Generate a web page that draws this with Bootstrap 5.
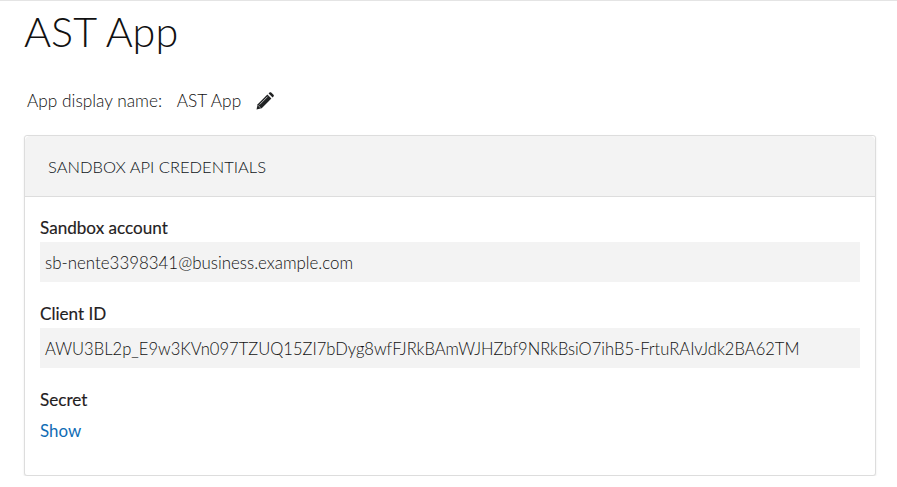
<!DOCTYPE html>
<html><head><meta charset="utf-8">
<link href="https://cdn.jsdelivr.net/npm/bootstrap@5.3.0/dist/css/bootstrap.min.css" rel="stylesheet">
<style>
body{font-family:"Lato","Open Sans",sans-serif;color:#111;background:#fff;border-top:1px solid #e4e4e4;overflow:hidden}
.pg{padding:0 21px 0 24px}
.ttl{font-size:41.3px;font-weight:300;margin:0;line-height:50px;padding-top:5px;color:#111}
.dn{font-size:17.3px;font-weight:300;margin:21px 0 10px 3px;height:48px;gap:14.5px}
.crd{border-color:#ddd;border-radius:3px;box-shadow:0 1px 2px rgba(0,0,0,.1)}
.crd .card-header{background:#f3f3f3;height:61px;padding:0 23px;border-color:#ddd;font-size:16.5px;font-weight:300;line-height:63px;text-transform:uppercase;color:#0d1420}
.crd .card-body{padding:19px 15px 27px}
.lb{font-size:17.1px;line-height:24px;margin-bottom:2px;color:#1f2122;-webkit-text-stroke:.15px #1f2122}
.vl{background:#f3f3f3;height:40px;line-height:42px;padding:0 5px;font-weight:300;margin-bottom:20px;color:#111}
.acct{font-size:16.9px}
.cid{font-size:16.57px}
.sh{color:#0f6cb5;font-size:16.9px;line-height:34px;display:block;text-decoration:none}
</style></head><body>
<div class="pg">
<h1 class="ttl">AST App</h1>
<div class="dn d-flex align-items-center"><span>App display name:</span><span>AST App</span>
<svg width="18" height="18" viewBox="0 0 18 18" fill="#1f2122"><path d="M.5 17.5l1.2-5.2L11.4 2.6l4 4-9.7 9.7z"/><path d="M12.6 1.4l.9-.9c.5-.5 1.2-.5 1.7 0l2.3 2.3c.5.5.5 1.2 0 1.7l-.9.9z"/><path d="M3.6 12.6l8-8" stroke="#fff" stroke-width=".7"/><path d="M2.2 13.5l2.4 2.4" stroke="#fff" stroke-width=".6"/></svg></div>
<div class="card crd"><div class="card-header">Sandbox API Credentials</div>
<div class="card-body">
<div class="lb">Sandbox account</div><div class="vl acct">sb-nente3398341@business.example.com</div>
<div class="lb">Client ID</div><div class="vl cid">AWU3BL2p_E9w3KVn097TZUQ15ZI7bDyg8wfFJRkBAmWJHZbf9NRkBsiO7ihB5-FrtuRAIvJdk2BA62TM</div>
<div class="lb">Secret</div><a href="#" class="sh">Show</a>
</div></div>
</div>
</body></html>
